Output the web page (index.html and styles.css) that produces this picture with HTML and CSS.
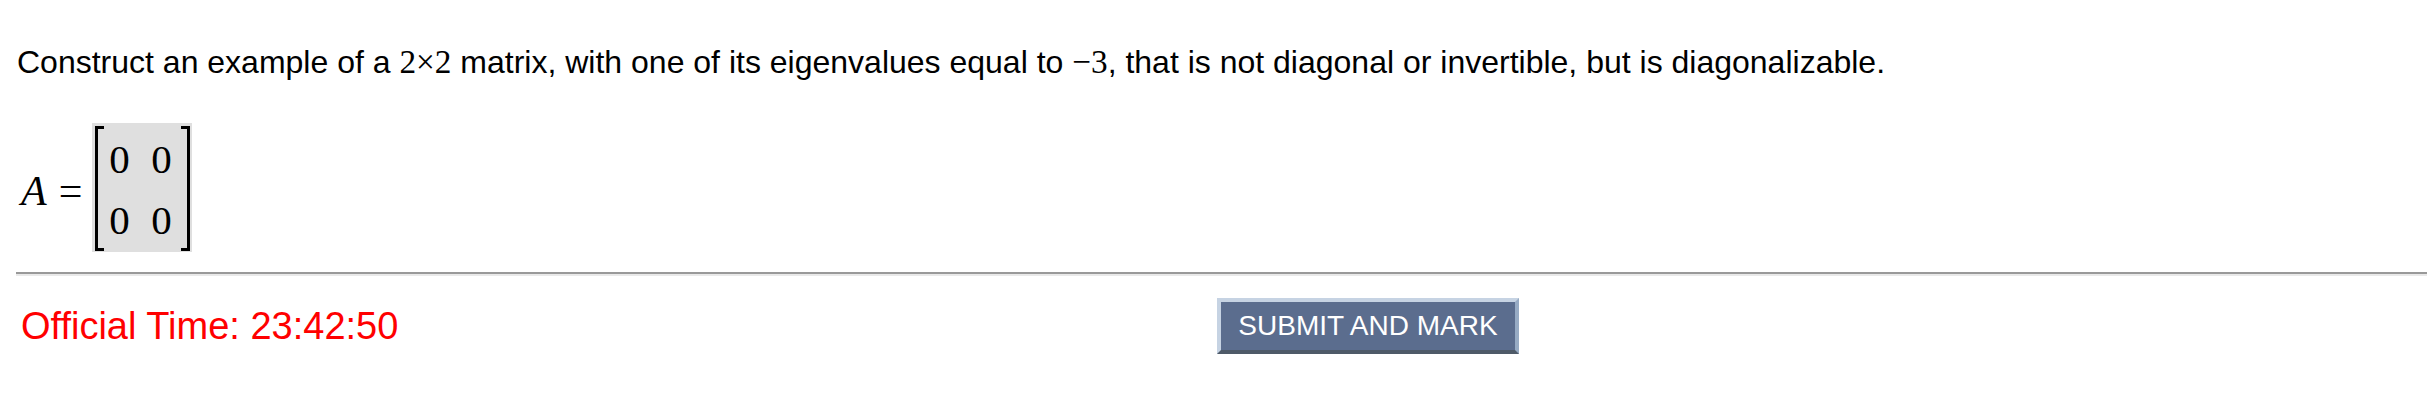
FILE: index.html
```html
<!DOCTYPE html>
<html>
<head>
<meta charset="utf-8">
<link rel="stylesheet" href="styles.css">
</head>
<body>
<div class="page">
  <p class="question">Construct an example of a <span class="m">2×2</span> matrix, with one of its eigenvalues equal to <span class="m">−3</span>, that is not diagonal or invertible, but is diagonalizable.</p>
  <div class="answer">
    <span class="lhs"><span class="var">A</span><span class="eq">=</span></span>
    <div class="matrix">
      <span class="br br-l"></span>
      <div class="cells">
        <span>0</span><span>0</span>
        <span>0</span><span>0</span>
      </div>
      <span class="br br-r"></span>
    </div>
  </div>
  <hr class="rule">
  <div class="footer">
    <span class="time">Official Time: 23:42:50</span>
    <button class="submit" type="button">SUBMIT AND MARK</button>
  </div>
</div>
</body>
</html>
```
FILE: styles.css
```css
html, body {
  margin: 0;
  padding: 0;
  background: #fff;
}
.page {
  padding-left: 17px;
  font-family: "Liberation Sans", Arial, sans-serif;
  color: #000;
}
.question {
  margin: 44px 0 0 0;
  font-size: 32px;
  line-height: 36px;
  white-space: nowrap;
}
.m {
  font-family: "Liberation Serif", "Times New Roman", serif;
  font-size: 1.04em;
}
.answer {
  display: flex;
  align-items: center;
  margin-top: 43px;
  font-family: "Liberation Serif", "Times New Roman", serif;
  font-size: 41px;
}
.lhs {
  display: flex;
  line-height: 44px;
  padding-top: 6px;
  margin-left: 4px;
  font-size: 42px;
}
.var {
  font-style: italic;
}
.eq {
  margin-left: 12px;
  margin-right: 10px;
}
.matrix {
  display: flex;
  background: #dfdfdf;
  padding: 3px 2px 1px 3px;
}
.br {
  width: 6px;
  border: 3px solid #000;
}
.br-l {
  border-right: none;
}
.br-r {
  border-left: none;
}
.cells {
  display: grid;
  grid-template-columns: 20px 20px;
  grid-auto-rows: 44px;
  column-gap: 22px;
  row-gap: 17px;
  line-height: 44px;
  padding: 10.5px 9.5px 9.5px 5px;
}
.rule {
  margin: 20px 0 0 -1px;
  height: 0;
  border: none;
  border-top: 2px solid #999;
  border-bottom: 2px solid #e9e9e9;
}
.footer {
  display: flex;
  align-items: center;
  margin-top: 22px;
}
.time {
  color: #ff0000;
  font-size: 38px;
  margin-left: 4px;
  width: 1196px;
}
.submit {
  font-family: "Liberation Sans", Arial, sans-serif;
  font-size: 28px;
  line-height: 32px;
  color: #fff;
  background: #5b6d8e;
  border-style: solid;
  border-width: 4px;
  border-color: #c6d3e3 #97abc4 #4e5a68 #c6d3e3;
  padding: 8px 16px;
  margin: 0;
  width: 302px;
  height: 56px;
  box-sizing: border-box;
  white-space: nowrap;
}
```
